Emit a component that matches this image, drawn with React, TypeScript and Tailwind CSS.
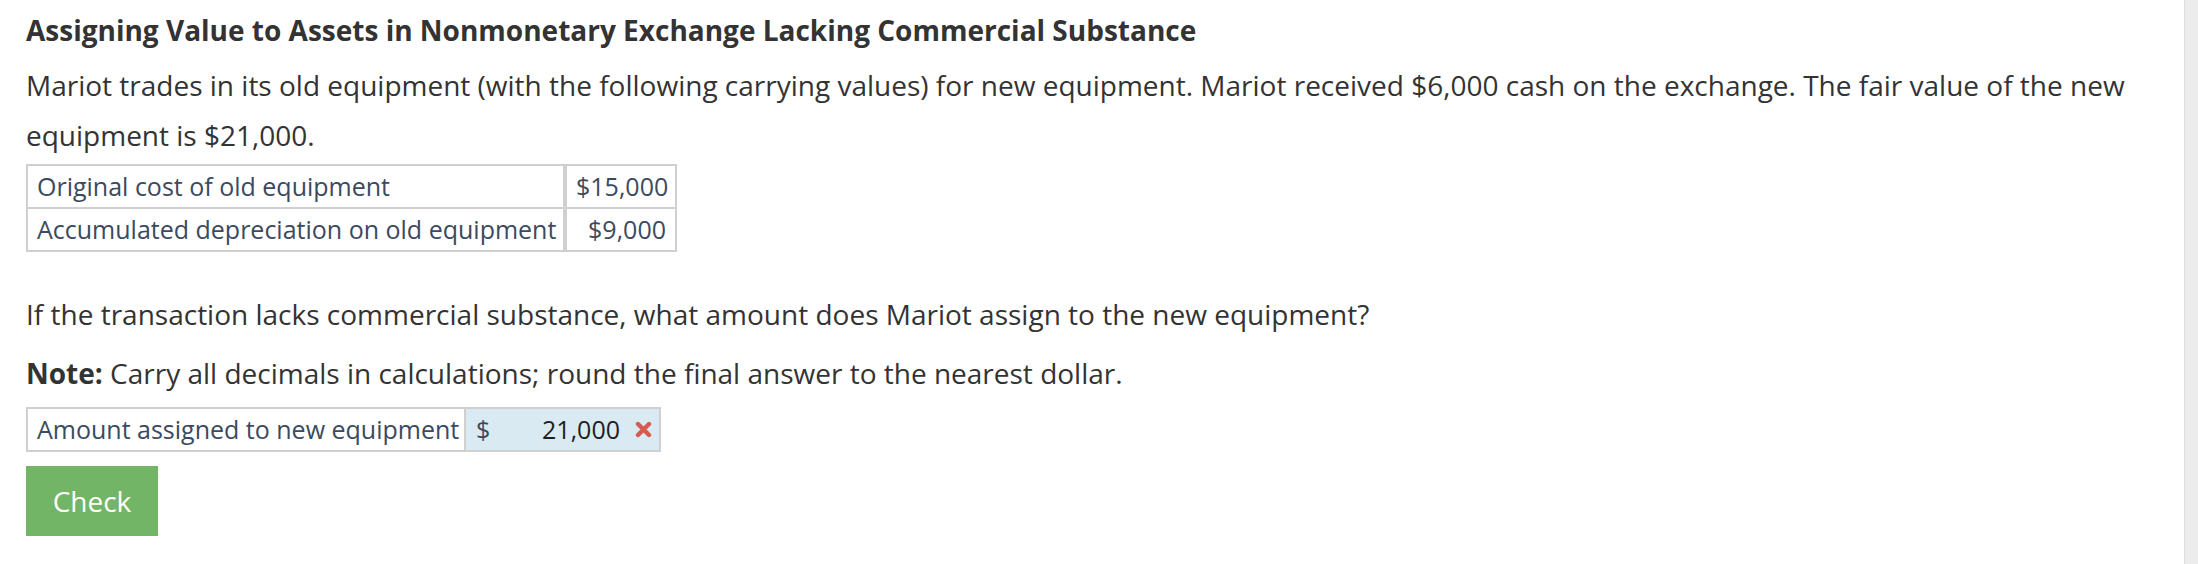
import React from "react";

function TimesIcon() {
  return (
    <svg width="17" height="17" viewBox="0 0 17 17" className="shrink-0">
      <path d="M3 3 L14 14 M14 3 L3 14" stroke="#d65a50" strokeWidth="4.4" strokeLinecap="round" />
    </svg>
  );
}

export default function App() {
  return (
    <div className="flex min-h-[564px] w-full bg-white font-['Open_Sans',sans-serif]">
      <div className="flex-1 pl-[26px] pr-[30px] pt-[12px]">
        <h1 className="text-[28px] leading-[36px] font-bold text-[#333333]">
          Assigning Value to Assets in Nonmonetary Exchange Lacking Commercial Substance
        </h1>
        <p className="mt-[12px] text-[28px] leading-[50px] text-[#333333]">
          Mariot trades in its old equipment (with the following carrying values) for new equipment. Mariot received $6,000 cash on the exchange. The fair value of the new equipment is $21,000.
        </p>

        <div className="mt-[4px] w-fit border-2 border-[#d0d0d0] text-[25px] leading-[41px] text-[#3b4a60]">
          <div className="flex">
            <div className="w-[537px] border-r-2 border-[#d0d0d0] px-[9px] whitespace-nowrap">
              Original cost of old equipment
            </div>
            <div className="w-[110px] border-l-2 border-[#d0d0d0] px-[9px] text-right">$15,000</div>
          </div>
          <div className="flex border-t-2 border-[#d0d0d0]">
            <div className="w-[537px] border-r-2 border-[#d0d0d0] px-[9px] whitespace-nowrap">
              Accumulated depreciation on old equipment
            </div>
            <div className="w-[110px] border-l-2 border-[#d0d0d0] px-[9px] text-right">$9,000</div>
          </div>
        </div>

        <p className="mt-[37px] text-[28px] leading-[50px] text-[#333333]">
          If the transaction lacks commercial substance, what amount does Mariot assign to the new equipment?
        </p>
        <p className="mt-[9px] text-[28px] leading-[50px] text-[#333333]">
          <span className="font-bold">Note:</span> Carry all decimals in calculations; round the final answer to the nearest dollar.
        </p>

        <div className="mt-[9px] flex w-fit border-2 border-[#d0d0d0] text-[25px] leading-[41px]">
          <div className="w-[438px] border-r-2 border-[#d0d0d0] px-[9px] whitespace-nowrap text-[#3b4a60]">
            Amount assigned to new equipment
          </div>
          <div className="flex w-[193px] items-center bg-[#d9eaf2] pl-[10px] pr-[7px]">
            <span className="w-[14px] text-[#3b4a60]">$</span>
            <input
              readOnly
              value="21,000"
              className="min-w-0 flex-1 bg-transparent text-right text-[25px] leading-[41px] text-[#1e1e1e] outline-none"
            />
            <span className="ml-[15px] flex items-center">
              <TimesIcon />
            </span>
          </div>
        </div>

        <button className="mt-[14px] flex h-[70px] w-[132px] items-center justify-center bg-[#73b566] text-[28px] text-white">
          Check
        </button>
      </div>
      <div className="w-[14px] shrink-0 border-l border-[#dcdcdc] bg-[#ececec]" />
    </div>
  );
}
